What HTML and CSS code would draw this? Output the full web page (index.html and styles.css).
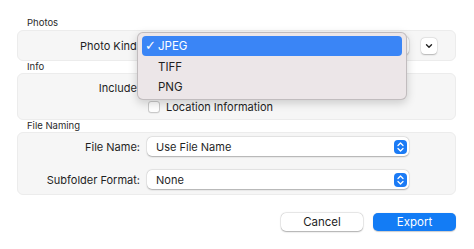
FILE: index.html
```html
<!DOCTYPE html>
<html>
<head>
<meta charset="utf-8">
<link rel="stylesheet" href="styles.css">
</head>
<body>
<div class="dialog">
  <div class="section-title">Photos</div>
  <div class="box box-photos">
    <div class="row">
      <div class="label">Photo Kind:</div>
      <div class="popup-wrap">
        <div class="popup"><span></span><span class="stepper"><svg width="7" height="10" viewBox="0 0 7 10"><path d="M1 3.5 L3.5 1 L6 3.5 M1 6.5 L3.5 9 L6 6.5" fill="none" stroke="#fff" stroke-width="1.3" stroke-linecap="round" stroke-linejoin="round"/></svg></span></div>
        <div class="menu">
          <div class="item selected"><span class="check">✓</span>JPEG</div>
          <div class="item">TIFF</div>
          <div class="item">PNG</div>
        </div>
      </div>
      <div class="disclosure"><svg width="8" height="6" viewBox="0 0 8 6"><path d="M1.5 1.8 L4 4.3 L6.5 1.8" fill="none" stroke="#222" stroke-width="1.4" stroke-linecap="round" stroke-linejoin="round"/></svg></div>
    </div>
  </div>

  <div class="section-title">Info</div>
  <div class="box box-info">
    <div class="row">
      <div class="label">Include:</div>
    </div>
    <div class="row">
      <div class="label"></div>
      <label class="check-row"><span class="checkbox"></span>Location Information</label>
    </div>
  </div>

  <div class="section-title">File Naming</div>
  <div class="box box-naming">
    <div class="row">
      <div class="label">File Name:</div>
      <div class="popup"><span>Use File Name</span><span class="stepper"><svg width="7" height="10" viewBox="0 0 7 10"><path d="M1 3.5 L3.5 1 L6 3.5 M1 6.5 L3.5 9 L6 6.5" fill="none" stroke="#fff" stroke-width="1.3" stroke-linecap="round" stroke-linejoin="round"/></svg></span></div>
    </div>
    <div class="row">
      <div class="label">Subfolder Format:</div>
      <div class="popup"><span>None</span><span class="stepper"><svg width="7" height="10" viewBox="0 0 7 10"><path d="M1 3.5 L3.5 1 L6 3.5 M1 6.5 L3.5 9 L6 6.5" fill="none" stroke="#fff" stroke-width="1.3" stroke-linecap="round" stroke-linejoin="round"/></svg></span></div>
    </div>
  </div>

  <div class="buttons">
    <button class="btn">Cancel</button>
    <button class="btn primary">Export</button>
  </div>
</div>
</body>
</html>
```

FILE: styles.css
```css
* { box-sizing: border-box; }
html, body { margin: 0; padding: 0; background: #ffffff; }
body {
  font-family: Inter, "Liberation Sans", sans-serif;
  font-size: 11px;
  color: #1f1f1f;
  width: 474px;
  height: 249px;
  overflow: hidden;
}
.dialog {
  padding: 17px 18px 0 17px;
}
.section-title {
  font-size: 9.5px;
  line-height: 12px;
  height: 12px;
  padding-left: 10px;
  color: #2a2a2a;
}
.box-photos { margin-top: 1px; }
.box {
  background: #f6f6f6;
  border: 1px solid #ececec;
  border-radius: 6px;
  display: flex;
  flex-direction: column;
}
.box-photos { padding: 5px 0 5px; }
.box-info { padding: 4px 0 3px; }
.box-naming { padding: 4px 0 5px; gap: 14px; }
.row {
  display: flex;
  align-items: center;
  height: 19px;
}
.label {
  width: 122px;
  text-align: right;
  flex: none;
  white-space: nowrap;
}
.popup-wrap {
  position: relative;
  margin-left: 7px;
}
.popup-wrap .popup { margin-left: 0; }
.popup {
  margin-left: 7px;
  width: 262px;
  height: 19px;
  background: #ffffff;
  border-radius: 5px;
  box-shadow: 0 0.5px 1.5px rgba(0,0,0,0.28), 0 0 0 0.5px rgba(0,0,0,0.06);
  display: flex;
  align-items: center;
  justify-content: space-between;
  padding: 0 2px 0 9px;
}
.stepper {
  width: 13px;
  height: 14px;
  border-radius: 4px;
  background: #1b7bf5;
  display: flex;
  align-items: center;
  justify-content: center;
}
.disclosure {
  margin-left: 12px;
  width: 16px;
  height: 16px;
  background: #fff;
  border-radius: 4px;
  box-shadow: 0 0.5px 1.5px rgba(0,0,0,0.25), 0 0 0 0.5px rgba(0,0,0,0.06);
  display: flex;
  align-items: center;
  justify-content: center;
}
.menu {
  position: absolute;
  left: -10px;
  top: -4px;
  width: 270px;
  height: 68px;
  background: #ece6e8;
  border: 1px solid rgba(0,0,0,0.18);
  border-radius: 6px;
  box-shadow: 0 3px 10px rgba(0,0,0,0.18);
  padding: 3px 4px;
  display: flex;
  flex-direction: column;
}
.item {
  height: 20px;
  line-height: 20px;
  padding-left: 16px;
  position: relative;
  color: #1f1f1f;
  border-radius: 4px;
  font-size: 11.5px;
}
.item.selected {
  background: #3a85f6;
  color: #fff;
}
.item + .item { margin-top: 0.5px; }
.check {
  position: absolute;
  left: 3px;
  top: 0;
  font-size: 13px;
  font-family: "DejaVu Sans", sans-serif;
}
.check-row {
  display: flex;
  align-items: center;
  margin-left: 8px;
  white-space: nowrap;
}
.checkbox {
  width: 12px;
  height: 12px;
  border-radius: 3px;
  background: #fff;
  border: 1px solid #c9c9c9;
  margin-right: 6px;
  box-shadow: 0 0.5px 0.5px rgba(0,0,0,0.08);
}
.buttons {
  display: flex;
  justify-content: flex-end;
  gap: 10px;
  margin-top: 18px;
}
.btn {
  font-family: Inter, "Liberation Sans", sans-serif;
  font-size: 11.5px;
  width: 82px;
  height: 18px;
  border: none;
  border-radius: 5px;
  background: #fff;
  color: #1f1f1f;
  box-shadow: 0 0.5px 1.5px rgba(0,0,0,0.3), 0 0 0 0.5px rgba(0,0,0,0.08);
  padding: 0;
}
.btn.primary {
  background: #137cf5;
  color: #fff;
  box-shadow: 0 0.5px 1px rgba(0,0,0,0.2);
  width: 83px;
}
```
